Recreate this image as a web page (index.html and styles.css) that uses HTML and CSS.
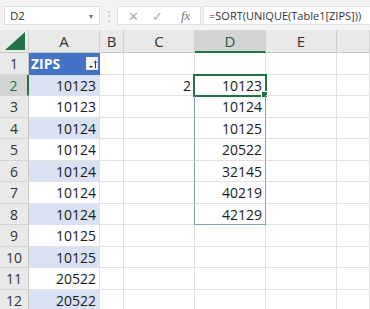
FILE: index.html
```html
<!DOCTYPE html>
<html lang="en">
<head>
    <meta charset="UTF-8">
    <title>ZIPS</title>
    <link rel="stylesheet" href="styles.css">
</head>
<body>
    <div class="fbar">
        <div class="namebox"><span>D2</span><span class="caret">&#9662;</span></div>
        <div class="grip">&#8942;</div>
        <div class="tools">
            <span class="x">&#10005;</span>
            <span class="ok">&#10003;</span>
            <span class="fx">fx</span>
        </div>
        <div class="formula">=SORT(UNIQUE(Table1[ZIPS]))</div>
    </div>

    <div class="sheet">
        <div class="corner"><svg width="20" height="18" viewBox="0 0 20 18"><polygon points="20,0 20,18 0,18" fill="#217346"/></svg></div>
        <div class="ch">A</div>
        <div class="ch">B</div>
        <div class="ch">C</div>
        <div class="ch sel">D</div>
        <div class="ch">E</div>
        <div class="ch"></div>

        <div class="rh">1</div>
        <div class="c thead">ZIPS
            <span class="filter"><svg width="11" height="12" viewBox="0 0 11 12"><path d="M2 8 L6 8 L4 10 Z" fill="#333"/><path d="M8.5 3 L8.5 10 M6.8 4.7 L8.5 3 L10.2 4.7" stroke="#333" stroke-width="1" fill="none"/></svg></span>
        </div>
        <div class="c"></div><div class="c"></div><div class="c"></div><div class="c"></div><div class="c"></div>

        <div class="rh sel">2</div>
        <div class="c num band">10123</div>
        <div class="c"></div>
        <div class="c num">2</div>
        <div class="c num spill active">10123<span class="handle"></span></div>
        <div class="c"></div><div class="c"></div>

        <div class="rh">3</div>
        <div class="c num">10123</div>
        <div class="c"></div><div class="c"></div>
        <div class="c num spill">10124</div>
        <div class="c"></div><div class="c"></div>

        <div class="rh">4</div>
        <div class="c num band">10124</div>
        <div class="c"></div><div class="c"></div>
        <div class="c num spill">10125</div>
        <div class="c"></div><div class="c"></div>

        <div class="rh">5</div>
        <div class="c num">10124</div>
        <div class="c"></div><div class="c"></div>
        <div class="c num spill">20522</div>
        <div class="c"></div><div class="c"></div>

        <div class="rh">6</div>
        <div class="c num band">10124</div>
        <div class="c"></div><div class="c"></div>
        <div class="c num spill">32145</div>
        <div class="c"></div><div class="c"></div>

        <div class="rh">7</div>
        <div class="c num">10124</div>
        <div class="c"></div><div class="c"></div>
        <div class="c num spill">40219</div>
        <div class="c"></div><div class="c"></div>

        <div class="rh">8</div>
        <div class="c num band">10124</div>
        <div class="c"></div><div class="c"></div>
        <div class="c num spill last">42129</div>
        <div class="c"></div><div class="c"></div>

        <div class="rh">9</div>
        <div class="c num">10125</div>
        <div class="c"></div><div class="c"></div><div class="c"></div><div class="c"></div><div class="c"></div>

        <div class="rh">10</div>
        <div class="c num band">10125</div>
        <div class="c"></div><div class="c"></div><div class="c"></div><div class="c"></div><div class="c"></div>

        <div class="rh">11</div>
        <div class="c num">20522</div>
        <div class="c"></div><div class="c"></div><div class="c"></div><div class="c"></div><div class="c"></div>

        <div class="rh">12</div>
        <div class="c num band">20522</div>
        <div class="c"></div><div class="c"></div><div class="c"></div><div class="c"></div><div class="c"></div>
    </div>
</body>
</html>
```

FILE: styles.css
```css
body {
    margin: 0;
    font-family: "Open Sans", "Noto Sans", sans-serif;
    background: white;
    color: #222;
    overflow: hidden;
}
.fbar {
    height: 30px;
    background: #f3f3f3;
    display: flex;
    align-items: flex-start;
    padding-top: 6px;
    box-sizing: border-box;
    font-size: 11.5px;
}
.namebox {
    margin-left: 4px;
    width: 96px;
    height: 19px;
    box-sizing: border-box;
    background: white;
    border: 1px solid #dcdcdc;
    display: flex;
    align-items: center;
    justify-content: space-between;
    padding: 0 6px 0 5px;
    color: #333;
}
.caret {
    font-size: 8px;
    color: #777;
}
.grip {
    width: 17px;
    text-align: center;
    color: #bbb;
    font-size: 12px;
    line-height: 19px;
}
.tools {
    width: 84px;
    height: 19px;
    box-sizing: border-box;
    background: white;
    border: 1px solid #e2e2e2;
    display: flex;
    align-items: center;
    color: #aaa;
}
.x {
    margin-left: 10px;
    font-size: 13px;
}
.ok {
    margin-left: 13px;
    font-size: 13px;
}
.fx {
    margin-left: 18px;
    font-family: "Liberation Serif", serif;
    font-style: italic;
    font-size: 13px;
    color: #777;
}
.formula {
    margin-left: 2px;
    flex: 1;
    height: 19px;
    box-sizing: border-box;
    background: white;
    border: 1px solid #e2e2e2;
    border-right: none;
    padding-left: 5px;
    line-height: 17px;
    font-size: 11px;
    color: #333;
}
.sheet {
    display: grid;
    grid-template-columns: 29px 71px 24px 71px 71px 71px 1fr;
    grid-template-rows: 23px repeat(12, 21.5px);
    background: white;
}
.corner {
    background: #e9e9e9;
    border-right: 1px solid #d0d0d0;
    border-bottom: 1px solid #c8c8c8;
    display: flex;
    align-items: flex-end;
    justify-content: flex-end;
    padding: 0 3px 2px 0;
}
.ch {
    background: #e9e9e9;
    border-right: 1px solid #d0d0d0;
    border-bottom: 1px solid #c8c8c8;
    text-align: center;
    font-size: 15px;
    line-height: 22px;
    color: #333;
}
.ch.sel {
    background: #d4d4d4;
    border-bottom: 2px solid #217346;
    color: #1e5c3a;
}
.rh {
    background: #e9e9e9;
    border-right: 1px solid #c8c8c8;
    border-bottom: 1px solid #d4d4d4;
    text-align: center;
    font-size: 14px;
    line-height: 21px;
    color: #333;
}
.rh.sel {
    background: #d4d4d4;
    border-right: 2px solid #217346;
    color: #217346;
}
.c {
    border-right: 1px solid #e1e1e1;
    border-bottom: 1px solid #e1e1e1;
    font-size: 14px;
    line-height: 21px;
    position: relative;
    color: #1a1a1a;
}
.num {
    text-align: right;
    padding-right: 3px;
}
.band {
    background: #d9e1f2;
    border-bottom-color: #d9e1f2;
}
.thead {
    background: #4472c4;
    border-color: #4472c4;
    color: white;
    font-weight: bold;
    padding-left: 2px;
}
.filter {
    position: absolute;
    right: 1px;
    top: 4px;
    width: 12px;
    height: 13px;
    background: #f2f2f2;
    display: flex;
    align-items: center;
    justify-content: center;
}
.spill {
    border-left: 1px solid #7f9fc9;
    border-right: 1px solid #7f9fc9;
    margin-left: -1px;
}
.spill.last {
    border-bottom: 1px solid #7f9fc9;
}
.active {
    outline: 2px solid #217346;
    outline-offset: -1px;
}
.handle {
    position: absolute;
    right: -3px;
    bottom: -3px;
    width: 5px;
    height: 5px;
    background: #217346;
    border: 1px solid white;
}
```
